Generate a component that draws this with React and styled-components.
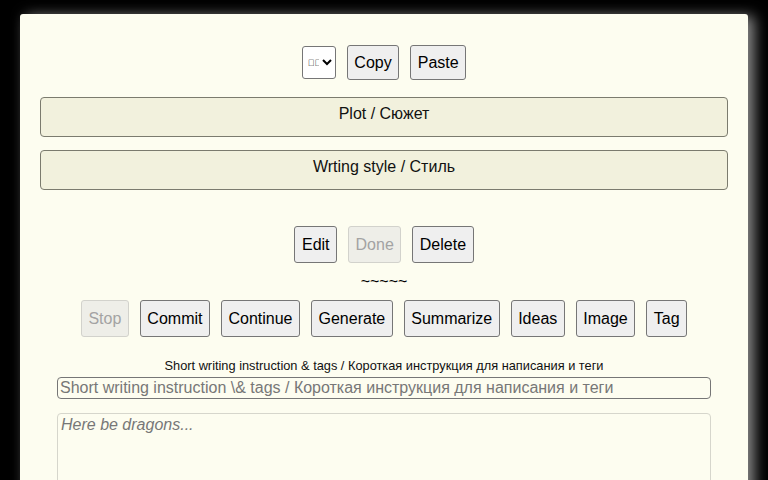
import styled, { createGlobalStyle } from "styled-components";

const Global = createGlobalStyle`
body {
  margin: 0;
  background: #000;
  font-family: "Liberation Sans", Arial, sans-serif;
}
`

const Card = styled.div`
margin: 14px 20px 0 20px;
width: 688px;
min-height: 466px;
padding: 0 20px;
background-color: #fdfdf0;
border-radius: 3px 3px 0 0;
box-shadow: 6px 2px 14px rgba(255, 255, 255, 0.55);
`
const Row = styled.div`
display: flex;
justify-content: center;
align-items: center;
gap: 11px;
padding-top: ${(p) => p.top || 0}px;
`
const Select = styled.select`
height: 33px;
width: 34px;
font-size: 9px;
padding: 0 0 0 1px;
border: 1px solid #767676;
border-radius: 3px;
background: #fff;
`
const Button = styled.button`
font-family: "Liberation Sans", Arial, sans-serif;
font-size: 16px;
line-height: 19px;
padding: ${(p) => (p.small ? "7px 6.5px" : "8px 6.5px")};
color: #000;
background-color: #efefef;
border: 1px solid #767676;
border-radius: 3px;
&:disabled {
  color: #a3a3a3;
  background-color: #eeeee8;
  border-color: #d2d2cc;
}
`
const Panel = styled.div`
margin-top: ${(p) => p.top}px;
height: 40px;
box-sizing: border-box;
padding-top: 7px;
text-align: center;
font-size: 16px;
line-height: 18px;
color: #111;
background-color: #f2f1dd;
border: 1px solid #7b7b6e;
border-radius: 4px;
`
const Tilde = styled.div`
text-align: center;
font-size: 16px;
line-height: 18px;
margin-top: 10px;
height: 27px;
`
const Label = styled.div`
text-align: center;
font-size: 12.8px;
line-height: 15px;
margin-top: 21px;
color: #111;
`
const Field = styled.div`
padding: 0 17px;
`
const Input = styled.input`
display: block;
width: 100%;
box-sizing: border-box;
height: 22px;
margin-top: 4px;
padding: 0 2px;
font-family: "Liberation Sans", Arial, sans-serif;
font-size: 16px;
background: #fdfdf0;
border: 1px solid #767676;
border-radius: 4px;
&::placeholder { color: #777; }
`
const Text = styled.textarea`
display: block;
width: 100%;
box-sizing: border-box;
height: 120px;
margin-top: 14px;
padding: 2px 3px;
font-family: "Liberation Sans", Arial, sans-serif;
font-size: 16px;
background: #fdfdf0;
border: 1px solid #d6d6cc;
border-radius: 4px;
resize: none;
&::placeholder { color: #777; font-style: italic; }
`

const actions = ["Commit", "Continue", "Generate", "Summarize", "Ideas", "Image", "Tag"];

const App = () => {
    return (
        <>
            <Global />
            <Card>
                <Row top={31}>
                    <Select><option>{"\uE000\uE001"}</option></Select>
                    <Button small>Copy</Button>
                    <Button small>Paste</Button>
                </Row>
                <Panel top={17}>Plot / Сюжет</Panel>
                <Panel top={13}>Wrting style / Стиль</Panel>
                <Row top={36}>
                    <Button>Edit</Button>
                    <Button disabled>Done</Button>
                    <Button>Delete</Button>
                </Row>
                <Tilde>~~~~~</Tilde>
                <Row>
                    <Button disabled>Stop</Button>
                    {actions.map((a) => <Button key={a}>{a}</Button>)}
                </Row>
                <Label>Short writing instruction &amp; tags / Короткая инструкция для написания и теги</Label>
                <Field>
                    <Input placeholder="Short writing instruction \& tags / Короткая инструкция для написания и теги" />
                    <Text placeholder="Here be dragons..." />
                </Field>
            </Card>
        </>
    )
}

export default App
